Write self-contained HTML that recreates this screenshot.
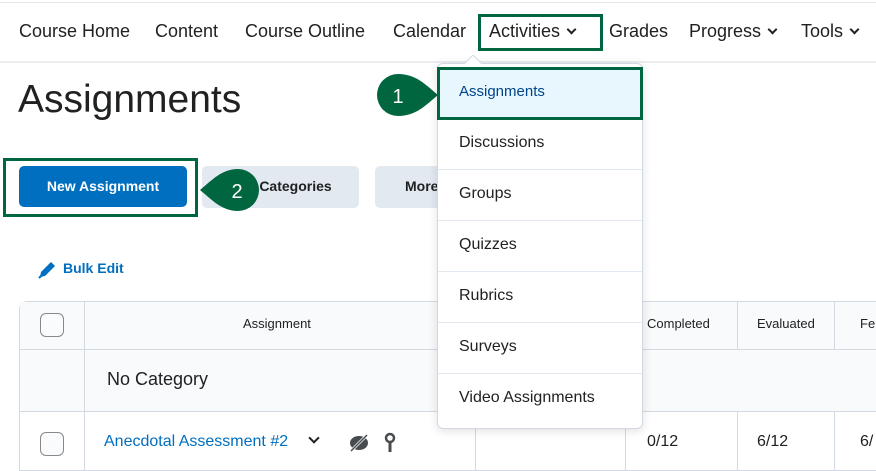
<!DOCTYPE html>
<html><head><meta charset="utf-8"><style>
*{margin:0;padding:0;box-sizing:border-box}
body{width:876px;height:467px;overflow:hidden;background:#fff;font-family:"Liberation Sans",sans-serif;color:#202122;position:relative}
.a{position:absolute;white-space:nowrap}
.nav{font-size:18px;top:21px;color:#202122}
.chev{display:inline-block;width:7px;height:7px;border-right:2px solid #202122;border-bottom:2px solid #202122;transform:rotate(45deg);margin-left:8px;position:relative;top:-4px}
.grn{border:3px solid #00663f}
.dd{left:437px;top:63px;width:206px;height:366px;background:#fff;border:1px solid #d3d9e3;border-radius:6px;box-shadow:0 2px 10px rgba(0,0,0,.12)}
.it{position:absolute;left:21px;font-size:16px;color:#202122}
.sep{position:absolute;left:0;width:204px;height:1px;background:#e3e9f1}
.tb{background:#e3e9f1;border-radius:5px;font-size:14px;font-weight:bold;text-align:center;line-height:41px}
.cb{width:24px;height:24px;border:1px solid #888;border-radius:6px;background:#fafbfc}
</style></head><body>
<div class="a" style="left:0;top:2px;width:876px;height:1px;background:#e5e7ea"></div>
<div class="a" style="left:0;top:61px;width:876px;height:2px;background:#eceef0"></div>
<div class="a nav" style="left:19px">Course Home</div>
<div class="a nav" style="left:155px">Content</div>
<div class="a nav" style="left:245px">Course Outline</div>
<div class="a nav" style="left:393px">Calendar</div>
<div class="a grn" style="left:478px;top:14px;width:125px;height:37px"></div>
<div class="a nav" style="left:489px">Activities<span class="chev"></span></div>
<div class="a nav" style="left:609px">Grades</div>
<div class="a nav" style="left:689px">Progress<span class="chev"></span></div>
<div class="a nav" style="left:801px">Tools<span class="chev"></span></div>

<div class="a" style="left:18px;top:78px;font-size:39px;color:#202122">Assignments</div>

<div class="a grn" style="left:3px;top:158px;width:195px;height:59px"></div>
<div class="a" style="left:19px;top:166px;width:168px;height:41px;background:#006fbf;border-radius:5px;color:#fff;font-size:14px;font-weight:bold;text-align:center;line-height:41px">New Assignment</div>
<div class="a tb" style="left:202px;top:166px;width:157px;height:42px;padding-left:30px">Categories</div>
<div class="a tb" style="left:375px;top:166px;width:80px;height:42px;text-align:left;padding-left:30px">More</div>
<svg class="a" style="left:198px;top:168px" width="64" height="44" viewBox="0 0 64 44"><path d="M2 22 C14 12 24 1 40 1 A21 21 0 0 1 40 43 C24 43 14 32 2 22Z" fill="#00663f"/><text x="39" y="30" fill="#fff" font-size="20" text-anchor="middle" font-family="Liberation Sans">2</text></svg>
<svg class="a" style="left:374px;top:73px" width="66" height="44" viewBox="0 0 66 44"><path d="M64 22 C52 12 42 1 24 1 A21 21 0 0 0 24 43 C42 43 52 32 64 22Z" fill="#00663f"/><text x="24" y="30" fill="#fff" font-size="20" text-anchor="middle" font-family="Liberation Sans">1</text></svg>

<svg class="a" style="left:38px;top:259px" width="20" height="20" viewBox="0 0 20 20"><path d="M3 13 L13 3 L17 7 L7 17 L2 18Z" fill="#006fbf"/><path d="M1 19 L6 14" stroke="#006fbf" stroke-width="2"/></svg>
<div class="a" style="left:63px;top:260px;font-size:14px;font-weight:bold;color:#006fbf">Bulk Edit</div>

<div class="a" style="left:19px;top:301px;width:870px;height:170px;border:1px solid #d3d9e3;border-radius:8px 0 0 0"></div>
<div class="a" style="left:20px;top:302px;width:860px;height:47px;background:#f9fafb"></div>
<div class="a" style="left:20px;top:350px;width:860px;height:61px;background:#f9fafb"></div>
<div class="a" style="left:19px;top:349px;width:860px;height:1px;background:#d3d9e3"></div>
<div class="a" style="left:19px;top:411px;width:860px;height:1px;background:#d3d9e3"></div>
<div class="a" style="left:84px;top:301px;width:1px;height:170px;background:#d3d9e3"></div>
<div class="a" style="left:475px;top:411px;width:1px;height:60px;background:#d3d9e3"></div>
<div class="a" style="left:625px;top:301px;width:1px;height:48px;background:#d3d9e3"></div>
<div class="a" style="left:625px;top:411px;width:1px;height:60px;background:#d3d9e3"></div>
<div class="a" style="left:737px;top:301px;width:1px;height:48px;background:#d3d9e3"></div>
<div class="a" style="left:737px;top:411px;width:1px;height:60px;background:#d3d9e3"></div>
<div class="a" style="left:834px;top:301px;width:1px;height:48px;background:#d3d9e3"></div>
<div class="a" style="left:834px;top:411px;width:1px;height:60px;background:#d3d9e3"></div>
<div class="a cb" style="left:40px;top:313px"></div>
<div class="a cb" style="left:40px;top:432px"></div>
<div class="a" style="left:243px;top:316px;font-size:13px">Assignment</div>
<div class="a" style="left:647px;top:316px;font-size:13px">Completed</div>
<div class="a" style="left:757px;top:316px;font-size:13px">Evaluated</div>
<div class="a" style="left:860px;top:316px;font-size:13px">Fe</div>
<div class="a" style="left:107px;top:369px;font-size:18px">No Category</div>
<div class="a" style="left:104px;top:433px;font-size:16px;color:#006fbf">Anecdotal Assessment #2</div>
<div class="a" style="left:310px;top:434px;width:8px;height:8px;border-right:2px solid #202122;border-bottom:2px solid #202122;transform:rotate(45deg)"></div>
<svg class="a" style="left:348px;top:433px" width="22" height="20" viewBox="0 0 22 20"><ellipse cx="11" cy="10" rx="9" ry="7" fill="#494c4e"/><path d="M3 18 L19 2" stroke="#fff" stroke-width="3"/><path d="M3 18 L19 2" stroke="#494c4e" stroke-width="1.5"/></svg>
<svg class="a" style="left:384px;top:432px" width="12" height="22" viewBox="0 0 12 22"><circle cx="6" cy="6" r="4" fill="none" stroke="#494c4e" stroke-width="2.5"/><rect x="4.5" y="9" width="3" height="11" fill="#494c4e"/></svg>
<div class="a" style="left:647px;top:433px;font-size:16px">0/12</div>
<div class="a" style="left:757px;top:433px;font-size:16px">6/12</div>
<div class="a" style="left:860px;top:433px;font-size:16px">6/</div>

<div class="a dd">
<svg style="position:absolute;left:25px;top:-9px" width="20" height="10"><path d="M0 10 L10 0 L20 10Z" fill="#fff" stroke="#d3d9e3"/><rect x="0" y="9" width="20" height="2" fill="#fff"/></svg>
<div style="position:absolute;left:-1px;top:3px;width:206px;height:53px;background:#e8f7fd;border:3px solid #00663f"></div>
<div class="it" style="top:19px;font-size:15px;color:#004489">Assignments</div>
<div class="it" style="top:70px">Discussions</div>
<div class="sep" style="top:105px"></div>
<div class="it" style="top:121px">Groups</div>
<div class="sep" style="top:156px"></div>
<div class="it" style="top:172px">Quizzes</div>
<div class="sep" style="top:207px"></div>
<div class="it" style="top:223px">Rubrics</div>
<div class="sep" style="top:258px"></div>
<div class="it" style="top:274px">Surveys</div>
<div class="sep" style="top:309px"></div>
<div class="it" style="top:325px">Video Assignments</div>
</div>
</body></html>
